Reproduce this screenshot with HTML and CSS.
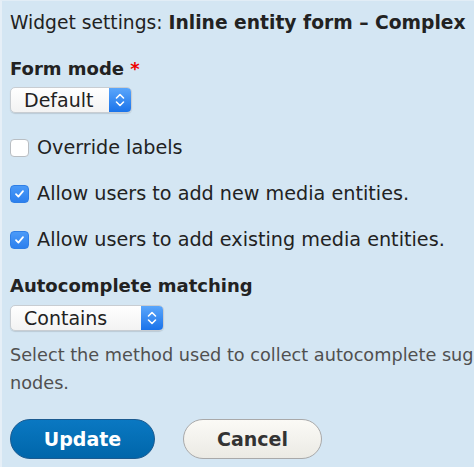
FILE: index.html
```html
<!DOCTYPE html>
<html>
<head>
<meta charset="utf-8">
<link rel="stylesheet" href="styles.css">
</head>
<body>
<div class="panel">
  <div class="title">Widget settings: <strong>Inline entity form – Complex</strong></div>

  <div class="field field-mode">
    <div class="label">Form mode <span class="req">*</span></div>
    <div class="select select-default">
      <span class="select-text">Default</span>
      <span class="select-arrow"><svg width="10" height="14" viewBox="0 0 10 14"><path d="M1.5 5 L5 1.5 L8.5 5 M1.5 9 L5 12.5 L8.5 9" fill="none" stroke="#fff" stroke-width="1.6" stroke-linecap="round" stroke-linejoin="round"/></svg></span>
    </div>
  </div>

  <div class="check-row">
    <span class="checkbox"></span>
    <span class="check-label">Override labels</span>
  </div>
  <div class="check-row">
    <span class="checkbox checked"><svg width="11" height="10" viewBox="0 0 11 10"><path d="M2 5.2 L4.4 7.6 L9 2.2" fill="none" stroke="#fff" stroke-width="1.8" stroke-linecap="round" stroke-linejoin="round"/></svg></span>
    <span class="check-label">Allow users to add new media entities.</span>
  </div>
  <div class="check-row">
    <span class="checkbox checked"><svg width="11" height="10" viewBox="0 0 11 10"><path d="M2 5.2 L4.4 7.6 L9 2.2" fill="none" stroke="#fff" stroke-width="1.8" stroke-linecap="round" stroke-linejoin="round"/></svg></span>
    <span class="check-label">Allow users to add existing media entities.</span>
  </div>

  <div class="field field-auto">
    <div class="label">Autocomplete matching</div>
    <div class="select select-contains">
      <span class="select-text">Contains</span>
      <span class="select-arrow"><svg width="10" height="14" viewBox="0 0 10 14"><path d="M1.5 5 L5 1.5 L8.5 5 M1.5 9 L5 12.5 L8.5 9" fill="none" stroke="#fff" stroke-width="1.6" stroke-linecap="round" stroke-linejoin="round"/></svg></span>
    </div>
    <div class="description">Select the method used to collect autocomplete suggestions. Note that Contains can cause performance issues on sites with thousands of<br>nodes.</div>
  </div>

  <div class="actions">
    <span class="button button-primary">Update</span>
    <span class="button button-secondary">Cancel</span>
  </div>
</div>
</body>
</html>
```

FILE: styles.css
```css
html, body {
  margin: 0;
  padding: 0;
}
body {
  width: 474px;
  height: 467px;
  overflow: hidden;
  background: #d4e6f3;
  font-family: "DejaVu Sans", "Noto Sans", sans-serif;
  color: #222;
}
.panel {
  height: 100%;
  box-sizing: border-box;
  border-left: 2px solid #e6eff7;
  border-top: 1px solid #e2edf6;
  padding: 11px 0 0 8px;
  overflow: hidden;
}
.title {
  font-size: 18.7px;
  line-height: 22px;
  white-space: nowrap;
  color: #222;
}
.title strong {
  font-weight: bold;
}
.field-mode {
  margin-top: 24px;
}
.label {
  font-size: 18px;
  font-weight: bold;
  line-height: 22px;
  color: #222;
  white-space: nowrap;
}
.req {
  color: #e00;
}
.select {
  display: flex;
  margin-top: 7px;
  height: 26px;
  box-sizing: border-box;
  border: 1px solid #c8cdd2;
  border-radius: 5px;
  background: linear-gradient(#ffffff, #f3f3f3);
  overflow: hidden;
  box-shadow: 0 1px 1px rgba(0,0,0,0.12);
}
.select-default {
  width: 122px;
}
.select-contains {
  width: 154px;
  margin-top: 8px;
}
.select-text {
  flex: 1;
  font-size: 19px;
  line-height: 24px;
  padding-left: 13px;
  color: #222;
}
.select-arrow {
  width: 22px;
  display: flex;
  align-items: center;
  justify-content: center;
  background: linear-gradient(#5aa6fb, #1a73ea);
}
.check-row {
  display: flex;
  align-items: center;
  gap: 8px;
  height: 22px;
  margin-top: 24px;
}
.checkbox {
  width: 19px;
  height: 18px;
  box-sizing: border-box;
  border: 1px solid #b9bec3;
  border-radius: 4px;
  background: #fff;
  display: flex;
  align-items: center;
  justify-content: center;
}
.checkbox.checked {
  border-color: #2f7fe6;
  background: linear-gradient(#4a9af8, #2c80ee);
}
.check-label {
  font-size: 19.2px;
  line-height: 22px;
  color: #222;
  white-space: nowrap;
}
.field-auto {
  margin-top: 24px;
}
.description {
  margin-top: 10px;
  font-size: 17.7px;
  line-height: 28px;
  color: #505050;
  white-space: nowrap;
}
.actions {
  display: flex;
  gap: 28px;
  margin-top: 22px;
}
.button {
  display: flex;
  align-items: center;
  justify-content: center;
  height: 40px;
  box-sizing: border-box;
  border-radius: 20px;
  font-size: 19px;
  font-weight: bold;
}
.button-primary {
  width: 145px;
  color: #fff;
  background: linear-gradient(#0a78c2, #0066aa);
  border: 1px solid #1a5a90;
}
.button-secondary {
  width: 139px;
  color: #333;
  background: linear-gradient(#fbfaf6, #ebeae4);
  border: 1px solid #a9a9a9;
}
```
